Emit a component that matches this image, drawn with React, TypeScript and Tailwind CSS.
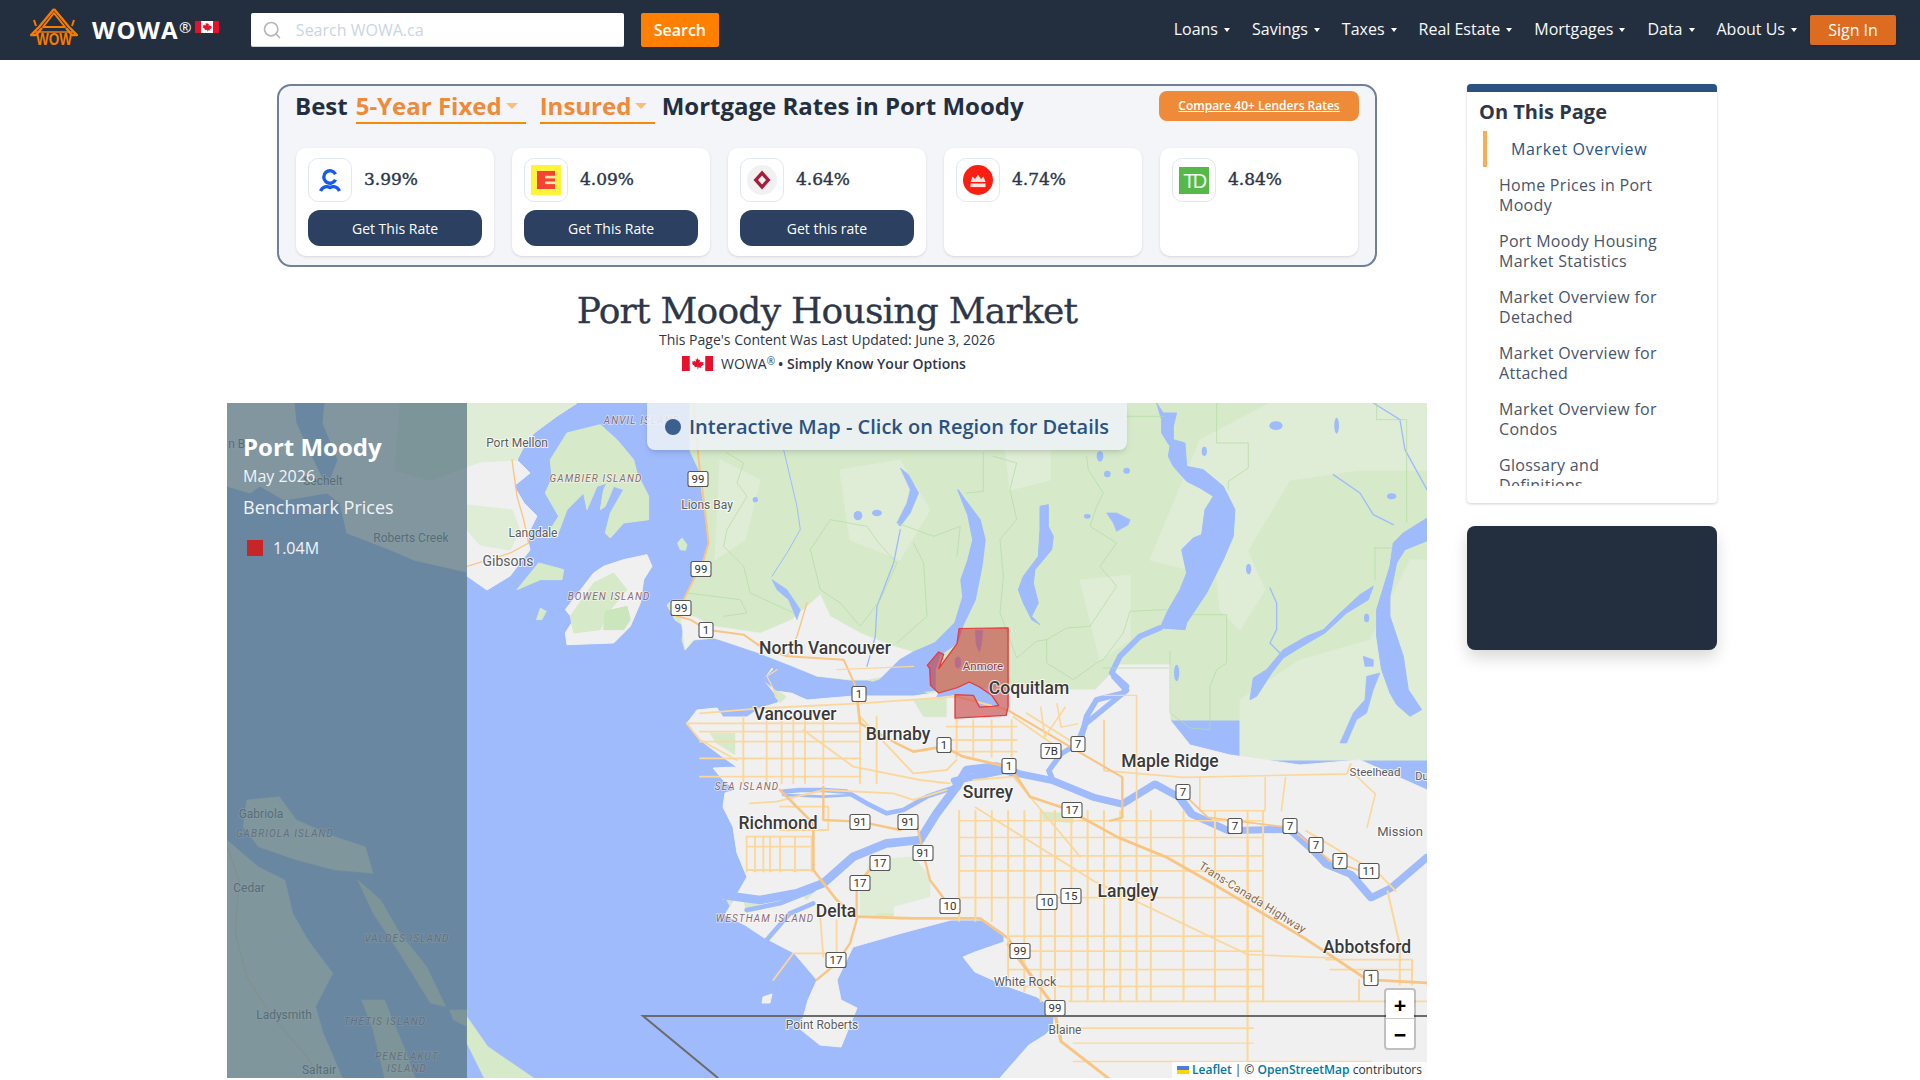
import React from "react";
import { Search } from "lucide-react";

const WATER = "#9fbbfc";
const GREEN = "#d6eaca";
const LIGHT = "#dfedd6";
const GREY = "#f0f0f0";
const ROAD = "#fbd79c";
const MAJOR = "#f8c583";
const TRAIL = "#b5dca6";

function Flag({ className }: { className?: string }) {
  return (
    <svg viewBox="0 0 48 24" className={className} preserveAspectRatio="none">
      <rect width="48" height="24" fill="#fff" />
      <rect width="12" height="24" fill="#e8112d" />
      <rect x="36" width="12" height="24" fill="#e8112d" />
      <path
        d="M24 3l2 3.6 2-1-.8 5 2.6-2.4.7 1.7 3-.5-1 3.2 1.3.8-4.6 3.8.5 1.7-4.7-.6V21h-1v-3.7l-4.7.6.5-1.7-4.6-3.8 1.3-.8-1-3.2 3 .5.7-1.7 2.6 2.4-.8-5 2 1z"
        fill="#e8112d"
      />
    </svg>
  );
}

function Logo() {
  return (
    <svg viewBox="0 0 48 40" className="w-[48px] h-[40px] -translate-y-[2px]" fill="none" stroke="#f57c00">
      <path d="M24 1 L9 19 L1 27 H6 L12 20 M24 1 L39 19 L47 27 H42 L36 20" strokeWidth="2.4" strokeLinejoin="round" />
      <path d="M24 5 L13 19 H35 Z" strokeWidth="2" strokeLinejoin="round" />
      <path d="M6 18 L4 12 M42 18 L44 12" strokeWidth="2" />
      <text x="24" y="37" textAnchor="middle" fontSize="16" fontWeight="700" fontFamily="Liberation Sans Narrow, Liberation Sans, sans-serif" fill="#f57c00" stroke="none" textLength="36" lengthAdjust="spacingAndGlyphs">WOW</text>
      <path d="M5 24 H43" strokeWidth="1.4" />
    </svg>
  );
}

function Caret() {
  return <span className="ml-[6px] inline-block w-0 h-0 border-x-[3.5px] border-x-transparent border-t-[4px] border-t-white translate-y-[1px]" />;
}

function Header() {
  const items = ["Loans", "Savings", "Taxes", "Real Estate", "Mortgages", "Data", "About Us"];
  return (
    <header className="h-[60px] bg-[#232f3f] flex items-center pl-[30px] pr-[24px]">
      <Logo />
      <span className="ml-[14px] text-white font-bold text-[24px] tracking-[1.2px] leading-none">WOWA</span>
      <span className="text-white text-[15px] leading-none -translate-y-[3px]">®</span>
      <Flag className="ml-[3.5px] w-[24px] h-[12px] -translate-y-[3px]" />
      <div className="ml-[32px] w-[373px] h-[34px] bg-white rounded-[2px] flex items-center pl-[11px] border-b border-[#cbd5e0]">
        <Search className="w-[20px] h-[20px] text-[#b4b8bd]" strokeWidth={2} />
        <span className="ml-[14px] text-[16px] text-[#cbd5e0]">Search WOWA.ca</span>
      </div>
      <button className="ml-[17px] w-[78px] h-[34px] bg-[#ff7f00] rounded-[2px] text-white font-semibold text-[16px]">Search</button>
      <nav className="ml-auto flex items-center gap-[22px]">
        {items.map((t) => (
          <span key={t} className="text-[16px] text-[#f7fafc] whitespace-nowrap flex items-center -translate-y-[1px]">
            {t}
            <Caret />
          </span>
        ))}
      </nav>
      <button className="ml-[13px] w-[86px] h-[30px] bg-[#dd6b20] rounded-[2px] text-white text-[16px] shadow">Sign In</button>
    </header>
  );
}

function Dropdown({ label, width }: { label: string; width: string }) {
  return (
    <span className={`${width} h-[36px] border-b-2 border-[#f58a07] flex items-start`}>
      <span className="text-[#ee8a38]">{label}</span>
      <span className="ml-[4px] mt-[15px] w-0 h-0 border-x-[6px] border-x-transparent border-t-[6px] border-t-[#f6bf7e]" />
    </span>
  );
}

function RateCard({ rate, button, children }: { rate: string; button?: string; children: React.ReactNode }) {
  return (
    <div className="w-[198px] h-[108px] bg-white rounded-[10px] shadow-sm pl-[12px] pr-[12px] pt-[10px]">
      <div className="flex items-center">
        <div className="w-[44px] h-[44px] rounded-[10px] border border-[#e2e8f0] flex items-center justify-center shrink-0">{children}</div>
        <span className="ml-[12px] text-[17px] text-[#2d3748] font-['DejaVu_Serif',serif] [-webkit-text-stroke:0.4px_#2d3748]">{rate}</span>
      </div>
      {button && (
        <button className="mt-[8px] w-[174px] h-[36px] rounded-[12px] bg-[#2c4162] text-white text-[14px]">{button}</button>
      )}
    </div>
  );
}

function Banner() {
  return (
    <section className="mx-auto mt-[24px] w-[1100px] h-[183px] rounded-[14px] border-2 border-[#718096] bg-[#f3f5f9] px-[17px]">
      <div className="relative h-[62px] flex items-start pt-[2px] -ml-px text-[24px] font-bold text-[#232f3f] leading-[36px]">
        <span>Best</span>
        <span className="w-[8px]" />
        <Dropdown label="5-Year Fixed" width="w-[170px]" />
        <span className="w-[14px]" />
        <Dropdown label="Insured" width="w-[115px]" />
        <span className="w-[7px]" />
        <span>Mortgage Rates in Port Moody</span>
        <a className="ml-auto translate-x-[1px] mt-[3px] w-[200px] h-[30px] bg-[#ee8a38] rounded-[8px] flex items-center justify-center text-white text-[12px] font-semibold underline">
          Compare 40+ Lenders Rates
        </a>
      </div>
      <div className="flex gap-[18px]">
        <RateCard rate="3.99%" button="Get This Rate">
          <svg viewBox="0 0 30 30" className="w-[30px] h-[30px]" fill="none" stroke="#1659f0" strokeLinecap="butt">
            <path d="M20.500 9.200A6.200 6.200 0 1 0 20.500 14.800" strokeWidth="3.400" />
            <path d="M5.500 26C8 21 12 21 15 22.500 18 21 22 21 24.500 26" strokeWidth="3.400" />
          </svg>
        </RateCard>
        <RateCard rate="4.09%" button="Get This Rate">
          <svg viewBox="0 0 30 30" className="w-[30px] h-[30px]">
            <rect width="30" height="30" fill="#fff33b" />
            <rect x="6" y="6" width="18" height="18" fill="#f44336" />
            <rect x="14" y="10.800" width="10" height="2.600" fill="#fde9a0" />
            <rect x="14" y="16.500" width="10" height="2.600" fill="#fde9a0" />
          </svg>
        </RateCard>
        <RateCard rate="4.64%" button="Get this rate">
          <svg viewBox="0 0 30 30" className="w-[30px] h-[30px]">
            <circle cx="15" cy="15" r="15" fill="#f2f1f1" />
            <path d="M15 5.500L23.500 15 15 24.500 6.500 15z" fill="#a51c3c" />
            <path d="M15 10.500L19 15l-4 4.500L11 15z" fill="#f2f1f1" />
          </svg>
        </RateCard>
        <RateCard rate="4.74%">
          <svg viewBox="0 0 30 30" className="w-[30px] h-[30px]">
            <circle cx="15" cy="15" r="15" fill="#fb1e12" />
            <path d="M7.500 17L9.500 11.500 12 14 15 9.500 18 14 20.500 11.500 22.500 17z" fill="#ffe3dc" />
            <rect x="7.500" y="18.500" width="15" height="3.600" fill="#ffe3dc" />
          </svg>
        </RateCard>
        <RateCard rate="4.84%">
          <svg viewBox="0 0 30 27" className="w-[30px] h-[27px]">
            <rect width="30" height="27" fill="#54b948" />
            <text x="15" y="21" textAnchor="middle" fontSize="20" fontWeight="400" fontFamily="Liberation Sans, sans-serif" fill="#f0faee" letterSpacing="-2.5">TD</text>
          </svg>
        </RateCard>
      </div>
    </section>
  );
}

const pts = (a: number[]) => {
  const out: string[] = [];
  for (let i = 0; i < a.length; i += 2) out.push(`${a[i]},${a[i + 1]}`);
  return out.join(" ");
};

function Poly({ p, fill, sw = 1 }: { p: number[]; fill: string; sw?: number }) {
  return <polygon points={pts(p)} fill={fill} stroke={fill} strokeWidth={sw} strokeLinejoin="round" />;
}
function Line({ p, c = ROAD, w = 1.4 }: { p: number[]; c?: string; w?: number }) {
  return <polyline points={pts(p)} fill="none" stroke={c} strokeWidth={w} strokeLinejoin="round" strokeLinecap="round" />;
}

function Label({ x, y, t, s = 12, c = "#5c5c5c", w = 400 }: { x: number; y: number; t: string; s?: number; c?: string; w?: number }) {
  return (
    <text x={x} y={y} textAnchor="middle" dominantBaseline="middle" fontFamily="Roboto, sans-serif" fontSize={s} fontWeight={w} fill={c} stroke="#fff" strokeWidth={2} strokeOpacity={0.75} style={{ paintOrder: "stroke" }}>
      {t}
    </text>
  );
}
function City({ x, y, t }: { x: number; y: number; t: string }) {
  return <Label x={x} y={y} t={t} s={17.5} c="#3a3a3a" w={500} />;
}
function Isle({ x, y, t }: { x: number; y: number; t: string }) {
  return (
    <text x={x} y={y} textAnchor="middle" dominantBaseline="middle" fontFamily="Roboto, sans-serif" fontSize={10} fontStyle="italic" letterSpacing={1.1} fill="#8b6a70" stroke="#fff" strokeWidth={1.6} strokeOpacity={0.55} style={{ paintOrder: "stroke" }}>
      {t}
    </text>
  );
}
function Shield({ x, y, t }: { x: number; y: number; t: string }) {
  const w = t.length > 1 ? 20 : 14;
  return (
    <g>
      <rect x={x - w / 2} y={y - 7.5} width={w} height={15} rx={2} fill="#fff" stroke="#555" strokeWidth={1.1} />
      <text x={x} y={y + 0.5} textAnchor="middle" dominantBaseline="middle" fontFamily="Roboto, sans-serif" fontSize={11.5} fill="#333">{t}</text>
    </g>
  );
}

const shields: [number, number, string][] = [
  [698, 479, "99"], [701, 569, "99"], [681, 608, "99"], [706, 630, "1"], [859, 694, "1"], [944, 745, "1"],
  [1051, 751, "7B"], [1078, 744, "7"], [1009, 766, "1"], [1072, 810, "17"], [1183, 792, "7"], [1235, 826, "7"],
  [1290, 826, "7"], [1316, 845, "7"], [1340, 861, "7"], [1369, 871, "11"], [860, 822, "91"], [908, 822, "91"],
  [923, 853, "91"], [880, 863, "17"], [860, 883, "17"], [950, 906, "10"], [1047, 902, "10"], [1071, 896, "15"],
  [1020, 951, "99"], [836, 960, "17"], [1055, 1008, "99"], [1371, 978, "1"],
];

function MapDrawing() {
  const surreyV: [number, number][] = [[390, 1020], [430, 1020], [470, 1020], [510, 1200], [550, 1230], [590, 1260], [625, 1260], [665, 1260], [705, 1260], [745, 1260], [785, 1260], [825, 1260], [860, 1260], [940, 1260], [1017, 1260], [1097, 1260], [1135, 1260]];
  const surreyH: [number, number][] = [[720, 390], [770, 390], [825, 390], [870, 390], [950, 390], [1065, 510], [1110, 510], [1165, 510], [1215, 520]];
  const vanV = [190, 260, 305, 340, 375, 430, 540, 590];
  const vanH = [130, 155, 185, 235, 290];
  const rmdV = [200, 225, 250, 270, 300, 345, 395];
  const rmdH = [470, 500, 570];
  const burnV = [830, 880, 935, 995];
  const burnH = [140, 180, 215];
  return (
    <svg viewBox="227 403 1200 675" className="absolute inset-0 w-full h-full">
      <rect x="227" y="403" width="1200" height="675" fill={WATER} />

      {/* Sunshine Coast */}
      <Poly fill={GREY} p={[227,403,577,403,557,416,534,433,524,446,517,460,530,473,514,486,524,503,537,516,527,536,530,550,510,576,487,590,467,576,467,572,414,560,391,550,347,533,340,503,327,493,284,500,260,486,250,493,227,486]} />
      <Poly fill={LIGHT} p={[400,403,577,403,557,416,534,433,524,446,517,460,480,462,430,480,395,470]} />
      <Poly fill={LIGHT} p={[467,505,512,510,520,530,510,550,480,545,467,530]} />
      <Poly fill={WATER} p={[295,403,324,403,322,423,337,460,327,486,314,460,297,423]} />

      {/* Vancouver Island & Gulf Islands */}
      <g transform="translate(220 580) scale(0.3827 0.3333)">
        <Poly fill="#ecefe9" p={[70,660,155,650,200,720,300,770,380,800,400,880,300,870,200,840,100,800,60,740]} />
        <Poly fill="#ecefe9" p={[18,780,100,860,170,900,190,1000,230,1080,295,1180,250,1280,270,1360,320,1494,18,1494]} />
        <Poly fill="#e3ecdc" p={[360,900,420,960,470,1060,540,1160,590,1280,550,1270,470,1120,400,1000]} />
        <Poly fill="#e3ecdc" p={[370,1260,430,1260,480,1400,510,1494,430,1494,400,1350]} />
        <Poly fill="#e3ecdc" p={[600,1290,645,1290,645,1340,610,1320]} />
        <Poly fill={GREEN} p={[645,1310,700,1400,820,1494,690,1494,645,1390]} />
        <Line p={[18,800,50,900,40,1060,70,1190,130,1300,240,1450,240,1494]} c="#f5d9a5" w={3} />
      </g>

      {/* Islands of Howe Sound */}
      <g transform="translate(467 403) scale(0.3333)">
        <Poly fill={GREEN} sw={3} p={[250,170,300,90,400,65,450,110,500,170,510,210,545,280,545,350,470,360,430,405,415,390,430,330,470,260,440,250,415,310,400,320,410,260,420,240,390,250,360,320,350,270,300,320,270,400,240,395,275,340,235,270,255,225]} />
        <Poly fill={GREY} sw={3} p={[295,620,380,510,410,490,470,470,540,455,555,490,530,530,520,600,490,670,440,720,300,725,295,690,320,650]} />
        <Poly fill={GREEN} sw={3} p={[310,640,380,540,440,510,480,560,430,620,400,680,320,690]} />
        <Poly fill="#cbe5bc" sw={3} p={[415,625,480,610,490,650,470,680,410,680]} />
        <Poly fill={GREEN} sw={3} p={[150,560,215,480,290,500,285,530,220,530]} />
        <Poly fill={GREEN} sw={3} p={[632,420,645,405,660,425,655,442,640,440]} />
        <Poly fill={GREEN} sw={2} p={[208,650,220,615,238,625,225,650]} />
      </g>

      {/* Mainland north */}
      <Poly fill={GREEN} p={[690,403,1427,403,1427,720,1094,720,1004,700,940,695,867,680,850,680,817,676,794,666,777,660,764,655,744,645,714,638,694,640,685,650,682,640,684,626,675,620,667,605,672,600,684,600,694,580,704,560,709,543,705,513,702,493,699,470,690,451]} />
      <Poly fill={LIGHT} p={[1150,560,1200,440,1270,403,1427,403,1427,470,1360,470,1290,480,1230,580]} />
      <Poly fill={LIGHT} p={[1240,700,1300,660,1370,640,1410,560,1427,560,1427,760,1240,760]} />
      <Poly fill={LIGHT} p={[1215,560,1245,545,1265,590,1240,630,1220,610]} />
      <Poly fill={LIGHT} p={[720,460,760,480,745,540,715,560]} />
      <Poly fill={LIGHT} p={[1080,580,1130,575,1130,640,1100,660]} />
      <Poly fill={LIGHT} p={[840,470,900,460,930,510,900,560,850,540]} />
      <Poly fill={LIGHT} p={[1005,450,1050,450,1050,480,1010,490]} />

      {/* South land */}
      <Poly fill={GREY} p={[687,723,697,710,717,708,723,717,747,717,760,708,777,703,780,700,764,680,772,668,785,690,800,697,807,700,854,696,914,696,934,693,955,690,1008,687,1060,690,1095,690,1120,665,1170,665,1170,720,1190,745,1230,755,1300,765,1360,760,1427,790,1427,1078,1000,1078,1029,1045,1045,1035,1053,1027,1055,1010,1037,997,1004,985,975,972,963,957,975,952,1004,942,1004,933,984,920,951,920,902,933,853,947,837,980,841,1000,857,1008,841,1047,820,1045,800,1029,808,1000,817,980,794,953,763,937,745,925,725,915,747,877,737,853,733,827,723,807,725,793,735,790,723,780,713,768,737,767,720,755,700,740]} />
      <Poly fill={GREY} p={[763,997,772,994,770,1003,762,1003]} />
      <g transform="translate(467 403) scale(0.3333)">
        <Poly fill={GREY} p={[640,640,680,640,740,670,880,690,975,650,1020,610,1060,575,1090,640,1180,690,1280,730,1350,750,1370,770,1360,800,1200,830,1150,830,1050,820,890,755,740,705,680,710,655,740]} />
      </g>

      {/* Parks in the city */}
      <g transform="translate(680 680) scale(0.3333)">
        <Poly fill={GREEN} p={[90,160,165,160,165,225,110,190]} />
        <Poly fill={LIGHT} p={[540,640,570,540,700,530,750,590,750,650,640,680,640,710,540,710]} />
        <Poly fill={GREEN} p={[700,60,800,50,800,110,730,110]} />
        <Poly fill={GREEN} p={[590,700,640,700,640,710,590,710]} />
        <Poly fill={GREEN} p={[1085,395,1180,400,1180,430,1090,420]} />
        <Poly fill={GREEN} p={[280,20,320,50,300,70,285,50]} />
        <Poly fill={GREEN} p={[100,640,150,640,130,660]} />
        <Poly fill={GREEN} p={[190,660,260,680,200,700]} />
        <Poly fill={GREEN} p={[135,650,160,650,150,680]} />
        <Poly fill={GREEN} p={[360,640,400,640,380,660]} />
      </g>

      {/* Water */}
      <Poly fill={WATER} sw={1.5} p={[958,490,965,500,980,520,985,540,982,565,977,590,975,600,963,625,957,643,940,655,935,670,935,690,915,692,880,692,869,684,880,680,900,660,914,652,935,643,955,623,963,597,961,580,968,560,973,540,968,515]} />
      <Poly fill={WATER} p={[763,680,775,668,800,680,850,682,880,684,880,692,850,692,790,692,776,690]} />
      <g transform="translate(800 580) scale(0.408 0.3344)">
        <Poly fill={WATER} sw={2} p={[340,338,385,322,415,305,440,320,470,345,487,375,470,378,440,380,425,345,380,343,335,350]} />
        <Poly fill={WATER} sw={2} p={[430,150,448,150,445,190,440,215,432,195]} />
        <ellipse cx="387" cy="247" rx="8" ry="18" fill={WATER} />
      </g>
      <g transform="translate(960 403) scale(0.3333)" fill={WATER}>
        <Poly fill={WATER} sw={3} p={[590,0,610,30,650,30,640,70,640,110,675,120,680,190,730,200,790,250,825,320,820,400,790,470,740,570,680,660,675,680,600,675,625,620,660,560,680,510,665,440,700,405,725,395,735,320,760,280,720,255,680,235,640,190,625,160,630,130,605,90,605,50]} />
        <Poly fill={WATER} sw={3} p={[240,310,265,305,265,370,280,400,275,440,225,500,220,540,235,600,215,640,240,665,215,650,190,600,175,560,190,520,235,460,240,380]} />
        <Poly fill={WATER} sw={3} p={[1240,550,1225,590,1160,630,1095,690,1060,710,1010,740,970,765,935,810,890,880,870,890,880,825,920,800,970,740,1040,700,1090,680,1130,640,1200,575]} />
        <Poly fill={WATER} sw={3} p={[1410,340,1410,410,1335,440,1310,480,1290,580,1290,640,1330,760,1345,860,1385,920,1350,940,1310,905,1290,870,1265,800,1250,700,1250,620,1290,490,1300,420,1330,390]} />
        <Poly fill={WATER} sw={2} p={[440,330,470,330,510,350,505,365,470,385,460,360]} />
        <Poly fill={WATER} sw={2} p={[1210,760,1240,770,1240,790,1215,790]} />
        <Poly fill={WATER} sw={2} p={[1220,820,1260,810,1240,860,1220,930,1190,950,1160,1020,1140,1020,1180,930,1215,890]} />
        <ellipse cx="948" cy="68" rx="20" ry="13" />
        <ellipse cx="733" cy="145" rx="8" ry="14" />
        <ellipse cx="866" cy="498" rx="8" ry="16" />
        <ellipse cx="442" cy="213" rx="10" ry="10" />
        <ellipse cx="500" cy="203" rx="10" ry="9" />
        <ellipse cx="382" cy="340" rx="10" ry="7" />
        <ellipse cx="650" cy="810" rx="8" ry="25" />
        <ellipse cx="1295" cy="280" rx="14" ry="9" />
        <ellipse cx="1220" cy="645" rx="8" ry="13" />
        <ellipse cx="1130" cy="68" rx="7" ry="24" />
        <ellipse cx="420" cy="160" rx="10" ry="16" />
        <Line p={[1120,215,1200,270,1240,335,1300,365]} c={WATER} w={4} />
        <Line p={[930,555,950,600,950,680,930,720,960,750]} c={WATER} w={4} />
        <Line p={[1240,0,1320,50,1335,140,1401,260]} c={WATER} w={4} />
        <Line p={[600,675,540,700,480,760,455,810,500,850,490,870,410,890,380,940,360,1020]} c={WATER} w={17} />
      </g>
      <g transform="translate(467 403) scale(0.3333)">
        <Poly fill={WATER} sw={2} p={[1300,195,1325,215,1355,270,1330,330,1300,370,1290,360,1320,300,1330,260]} />
        <Poly fill={WATER} sw={2} p={[915,530,960,560,1000,620,990,650,965,590,930,560]} />
        <ellipse cx="1173" cy="338" rx="13" ry="14" fill={WATER} />
        <ellipse cx="1230" cy="330" rx="15" ry="10" fill={WATER} />
        <ellipse cx="865" cy="290" rx="8" ry="8" fill={WATER} />
        <Line p={[950,140,990,310,1000,380,960,450,915,520]} c={WATER} w={3} />
        <Line p={[1300,380,1280,480,1230,610,1225,700,1200,790]} c={WATER} w={4} />
      </g>
      <g transform="translate(800 580) scale(0.408 0.3344)">
        <Line p={[380,600,500,570,620,600,720,650,790,670,870,610,930,650,960,700,1050,750,1200,745,1260,810,1290,850,1350,880,1400,950,1450,920,1536,830]} c={WATER} w={21} />
        <Line p={[680,490,700,430,800,330,770,290]} c={WATER} w={15} />
        <Line p={[680,490,640,520,610,570,620,600]} c={WATER} w={14} />
      </g>
      <g transform="translate(680 680) scale(0.3333)">
        <Line p={[310,335,360,330,430,330,500,335,560,370,620,400,670,390,740,350,830,320,860,270,950,260,1010,280]} c={WATER} w={14} />
        <Line p={[830,320,860,270,950,260,1010,280]} c={WATER} w={26} />
        <Line p={[310,345,430,350,520,345]} c={WATER} w={8} />
        <Line p={[90,640,240,660,350,640,430,610,520,530,620,490,720,480,770,400,830,320]} c={WATER} w={26} />
        <Line p={[200,690,300,670,400,630]} c={WATER} w={14} />
        <Line p={[260,780,330,700,400,670]} c={WATER} w={14} />
      </g>

      {/* Trails and park edges */}
      <g strokeDasharray="6 3" fill="none">
        <g transform="translate(467 403) scale(0.3333)">
          <Line p={[780,150,830,180,810,240,840,280,780,380,770,430,830,490,850,570,980,630]} c={TRAIL} w={2.5} />
          <Line p={[1030,440,1090,350,1200,370,1235,420,1290,480,1240,590,1180,670]} c={TRAIL} w={2.5} />
          <Line p={[1030,440,1060,560,1120,600,1180,670]} c={TRAIL} w={2.5} />
          <Line p={[1290,360,1400,400,1480,370,1470,460]} c={TRAIL} w={2.5} />
          <Line p={[1340,420,1370,480,1380,640,1290,720]} c={TRAIL} w={2.5} />
          <Line p={[660,570,820,590,840,630,770,640]} c={TRAIL} w={2.5} />
        </g>
        <g transform="translate(960 403) scale(0.3333)">
          <Line p={[70,150,70,265,20,270]} c={TRAIL} w={2.5} />
          <Line p={[100,160,170,180,150,260,170,350,120,410,130,520,120,630,170,765,230,715,260,710,320,675,390,670,470,550,420,490,470,420,390,370,410,310,430,270,385,200,380,160]} c={TRAIL} w={2.5} />
          <Line p={[260,710,260,780,340,830,410,780,430,770,490,690,510,625,620,620]} c={TRAIL} w={2.5} />
          <Line p={[770,0,770,120,865,120,865,195,805,235,805,260]} c={TRAIL} w={2.5} />
          <Line p={[700,635,800,635,800,780,770,800,750,850,750,980,690,975,630,930,630,745]} c={TRAIL} w={2.5} />
          <Line p={[500,40,610,40]} c={TRAIL} w={2.5} />
          <Line p={[1250,0,1250,50,1340,50,1340,360]} c={TRAIL} w={2.5} />
          <Line p={[1245,435,1300,435]} c={TRAIL} w={2.5} />
          <Line p={[1245,435,1245,530]} c={TRAIL} w={2.5} />
          <Line p={[430,795,625,795]} c={TRAIL} w={2.5} />
        </g>
      </g>

      {/* Roads */}
      <g transform="translate(680 680) scale(0.3333)">
        {vanV.map((x) => <Line key={x} p={[x, 110, x, 310]} w={5.5} />)}
        {vanH.map((y) => <Line key={y} p={[60, y, 540, y]} w={5.5} />)}
        {rmdV.map((x) => <Line key={x} p={[x, 470, x, 575]} w={5.5} />)}
        {rmdH.map((y) => <Line key={y} p={[200, y, 395, y]} w={5.5} />)}
        {burnV.map((x) => <Line key={x} p={[x, 120, x, 230]} w={5.5} />)}
        {burnH.map((y) => <Line key={y} p={[800, y, 1010, y]} w={5.5} />)}
        <Line p={[60,130,20,130,60,180,170,240]} w={5.5} />
        <Line p={[540,110,700,280,800,270,830,240]} w={5.5} />
        <Line p={[370,150,520,260,720,300,810,310]} w={5.5} />
        <Line p={[210,370,290,365,430,330,640,340,700,360,800,330]} w={5.5} />
        <Line p={[300,380,445,380,445,450,300,450]} w={5.5} />
        <Line p={[880,300,1000,290,1200,530]} w={5.5} />
        <Line p={[1040,100,1200,200]} w={5.5} />
        <Line p={[60,100,240,85,540,70,830,50,985,90]} w={5.5} />
        <Line p={[1000,110,1130,200]} w={5.5} />
        <Line p={[420,700,430,830]} w={5.5} />
        <Line p={[470,720,470,840]} w={5.5} />
        <Line p={[280,900,340,820,440,820,470,850]} w={5.5} />
        <Line p={[300,330,400,430,400,570,470,660,530,710,700,715,900,715,985,775,1060,900]} c={MAJOR} w={8} />
        <Line p={[530,40,540,130,650,190,700,215,790,200,850,230,980,260,1010,290,1050,350,1170,390,1200,400]} c={MAJOR} w={8} />
        <Line p={[430,320,430,420,540,425,660,450,710,430,730,520,750,600,780,640,810,680]} c={MAJOR} w={7} />
        <Line p={[600,530,570,570,530,610,530,720,510,790,470,850,410,900]} c={MAJOR} w={7} />
      </g>
      <g transform="translate(800 580) scale(0.408 0.3344)">
        {surreyV.map(([x, e]) => <Line key={x} p={[x, 690, x, e]} w={5} />)}
        {surreyH.map(([y, s]) => <Line key={y} p={[s, y, 1135, y]} w={5} />)}
        <Line p={[1097,780,1097,1494]} w={5} />
        <Line p={[1135,1000,1135,1260]} w={5} />
        <Line p={[660,1260,1536,1260]} w={5} />
        <Line p={[620,1340,1110,1340]} w={5} />
        <Line p={[670,1385,1110,1385]} w={4} />
        <Line p={[670,1440,1400,1440]} w={4} />
        <Line p={[1290,1135,1500,1135,1500,1210]} w={5} />
        <Line p={[1300,1165,1500,1165]} w={5} />
        <Line p={[1370,1195,1370,1260]} w={5} />
        <Line p={[1440,930,1470,1090,1470,1210]} w={5} />
        <Line p={[430,680,720,900,1097,1120,1300,1130]} w={5} />
        <Line p={[1240,750,1420,880,1460,930]} w={5} />
        <Line p={[745,345,825,345,825,700]} w={4} />
        <Line p={[745,420,745,570,940,590,1340,580,1350,550]} w={5} />
        <Line p={[980,590,980,690,1140,690,1140,590]} w={4} />
        <Line p={[1180,690,1190,590]} w={4} />
        <Line p={[1350,570,1410,640,1390,740]} w={4} />
        <Line p={[510,390,790,590,790,710,760,720]} c={MAJOR} w={6} />
        <Line p={[940,640,1000,710,1200,740,1300,840,1400,880]} c={MAJOR} w={5} />
        <Line p={[590,380,600,470,650,380]} w={4} />
        <Line p={[630,370,640,440,680,430]} w={4} />
        <Line p={[660,690,780,770,900,830,1000,900,1235,1070,1390,1195,1536,1205]} c={MAJOR} w={8} />
        <Line p={[510,1090,620,1270,640,1380,760,1494]} c={MAJOR} w={8} />
      </g>
      <g transform="translate(467 403) scale(0.3333)">
        <Line p={[680,0,695,170,715,330,725,420,710,470,650,590,630,640,670,650,720,680,830,695,880,730,960,760,1130,770,1175,870]} c={MAJOR} w={6} />
        <Line p={[135,170,150,280,170,350,185,420,130,450,0,490]} c={MAJOR} w={4} />
        <Line p={[1020,600,990,700,960,760]} c={MAJOR} w={4} />
        <Line p={[1110,800,1340,790]} w={4} />
        <Line p={[930,800,900,820,930,880]} w={4} />
      </g>

      {/* Port Moody */}
      <g transform="translate(800 580) scale(0.408 0.3344)">
        <polygon
          points={pts([390,145,510,143,510,380,505,405,380,413,380,343,425,345,440,380,470,378,487,375,470,345,440,320,415,305,385,322,340,338,320,315,318,265,312,255,340,215,352,222,340,265,385,190])}
          fill="#c53030"
          fillOpacity={0.55}
          stroke="#e53e3e"
          strokeWidth={3.5}
          strokeLinejoin="round"
        />
      </g>

      {/* Labels */}
      <Label x={517} y={444} t="Port Mellon" />
      <Isle x={642} y={421} t="ANVIL ISLAND" />
      <Isle x={596} y={479} t="GAMBIER ISLAND" />
      <Label x={707} y={506} t="Lions Bay" />
      <Label x={533} y={534} t="Langdale" />
      <Label x={508} y={562} t="Gibsons" s={14} />
      <Isle x={609} y={597} t="BOWEN ISLAND" />
      <City x={825} y={649} t="North Vancouver" />
      <City x={795} y={715} t="Vancouver" />
      <City x={898} y={735} t="Burnaby" />
      <City x={1029} y={689} t="Coquitlam" />
      <City x={1170} y={762} t="Maple Ridge" />
      <City x={988} y={793} t="Surrey" />
      <City x={778} y={824} t="Richmond" />
      <City x={836} y={912} t="Delta" />
      <City x={1128} y={892} t="Langley" />
      <City x={1367} y={948} t="Abbotsford" />
      <Label x={983} y={667} t="Anmore" s={11.5} c="#8a4040" />
      <Label x={1375} y={773} t="Steelhead" s={11.5} />
      <Label x={1400} y={833} t="Mission" s={13} />
      <Label x={1422} y={777} t="Du" s={11} />
      <Label x={1025} y={983} t="White Rock" s={12.5} />
      <Label x={822} y={1026} t="Point Roberts" s={12} />
      <Label x={1065} y={1031} t="Blaine" s={12} />
      <Isle x={747} y={787} t="SEA ISLAND" />
      <Isle x={765} y={919} t="WESTHAM ISLAND" />
      <text transform="translate(1198 868) rotate(32)" fontFamily="Roboto, sans-serif" fontSize={11.5} fill="#8a6a4a" stroke="#fff" strokeWidth={1.5} strokeOpacity={0.6} style={{ paintOrder: "stroke" }} letterSpacing={0.3}>Trans-Canada Highway</text>
      <Label x={323} y={482} t="Sechelt" />
      <Label x={411} y={539} t="Roberts Creek" />
      <Label x={240} y={445} t="n Ba" />
      <Label x={261} y={815} t="Gabriola" />
      <Isle x={285} y={834} t="GABRIOLA ISLAND" />
      <Label x={249} y={889} t="Cedar" />
      <Isle x={407} y={939} t="VALDES ISLAND" />
      <Label x={284} y={1016} t="Ladysmith" />
      <Isle x={385} y={1022} t="THETIS ISLAND" />
      <Isle x={407} y={1057} t="PENELAKUT" />
      <Isle x={407} y={1069} t="ISLAND" />
      <Label x={319} y={1071} t="Saltair" />

      {shields.map(([x, y, t], i) => <Shield key={i} x={x} y={y} t={t} />)}

      {/* Border */}
      <polyline points="1427,1016 643,1016 718,1078" fill="none" stroke="#6b6b6b" strokeWidth={2} />
    </svg>
  );
}

function MapPanel() {
  return (
    <section className="relative mt-[30px] w-[1200px] h-[675px] overflow-hidden">
      <MapDrawing />
      <div className="absolute left-0 top-0 bottom-0 w-[240px] bg-[rgba(86,115,128,0.72)] pl-[16px] pt-[28px] text-white">
        <div className="text-[24px] font-bold leading-[32px]">Port Moody</div>
        <div className="text-[16px] leading-[24px] mt-[1px] text-[#f0f4f8]">May 2026</div>
        <div className="text-[18px] leading-[28px] mt-[5px] text-[#f0f4f8]">Benchmark Prices</div>
        <div className="flex items-center mt-[15px] ml-[4px]">
          <span className="w-[16px] h-[16px] bg-[#c82626]" />
          <span className="ml-[10px] text-[16px] leading-[24px] text-[#f0f4f8]">1.04M</span>
        </div>
      </div>
      <div className="absolute left-[420px] top-0 w-[480px] h-[47px] bg-[rgba(237,242,247,0.85)] rounded-b-[8px] shadow-md flex items-center pl-[18px]">
        <span className="w-[16px] h-[16px] rounded-full bg-[#3b5f8f]" />
        <span className="ml-[8px] text-[20px] font-semibold text-[#2c5282] whitespace-nowrap">Interactive Map - Click on Region for Details</span>
      </div>
      <div className="absolute left-[1157px] top-[585px] w-[32px] h-[62px] bg-white rounded-[4px] border-2 border-[rgba(0,0,0,0.2)] bg-clip-padding flex flex-col">
        <div className="h-[29px] border-b border-[#ccc] flex items-center justify-center text-[22px] font-bold text-black leading-none">+</div>
        <div className="h-[29px] flex items-center justify-center text-[22px] font-bold text-black leading-none">−</div>
      </div>
      <div className="absolute right-0 bottom-0 h-[16px] bg-[rgba(255,255,255,0.8)] pl-[5px] pr-[5px] flex items-center text-[12px] text-[#333] leading-none whitespace-nowrap">
        <span className="w-[12px] h-[8px] mr-[3px] flex flex-col">
          <span className="h-1/2 bg-[#4c7be1]" />
          <span className="h-1/2 bg-[#ffd500]" />
        </span>
        <span className="text-[#0078a8] font-semibold">Leaflet</span>
        <span className="mx-[3px]">|</span>
        <span>©&nbsp;</span>
        <span className="text-[#0078a8] font-semibold">OpenStreetMap</span>
        <span>&nbsp;contributors</span>
      </div>
    </section>
  );
}

function Sidebar() {
  const items = [
    "Home Prices in Port Moody",
    "Port Moody Housing Market Statistics",
    "Market Overview for Detached",
    "Market Overview for Attached",
    "Market Overview for Condos",
    "Glossary and Definitions",
  ];
  return (
    <aside className="w-[250px] mt-[24px] shrink-0">
      <div className="h-[419px] bg-white rounded-[4px] border-t-[8px] border-[#2c5282] shadow-[0_1px_3px_rgba(0,0,0,0.18)] pl-[12px]">
        <h2 className="text-[20px] font-bold text-[#2d3748] leading-[28px] pt-[6px] h-[39px]">On This Page</h2>
        <div className="h-[355px] overflow-hidden">
          <div className="ml-[4px] border-l-[4px] border-[#f6ad55] h-[36px] pl-[24px] flex items-center text-[16px] font-medium tracking-[0.65px] text-[#2c5282]">Market Overview</div>
          <ul className="pl-[20px] pr-[20px] pt-[8px] flex flex-col gap-[16px]">
            {items.map((t) => (
              <li key={t} className="text-[16px] font-medium leading-[20px] tracking-[0.3px] text-[#4a5568] w-[170px]">{t}</li>
            ))}
          </ul>
        </div>
      </div>
      <div className="mt-[23px] h-[124px] bg-[#232f3f] rounded-[8px] shadow-[0_8px_16px_rgba(0,0,0,0.15)]" />
    </aside>
  );
}

export default function App() {
  return (
    <div className="w-[1920px] h-[1080px] overflow-hidden bg-white font-['Open_Sans','Noto_Sans',sans-serif]">
      <Header />
      <div className="flex pl-[227px] gap-[40px]">
        <main className="w-[1200px]">
          <Banner />
          <div className="mt-[22px] text-center">
            <h1 className="text-[36px] leading-[43px] tracking-[-0.76px] text-[#2d3748] font-['DejaVu_Serif',serif] [-webkit-text-stroke:0.3px_#2d3748]">Port Moody Housing Market</h1>
            <p className="text-[14px] leading-[16px] text-[#2d3748]">This Page's Content Was Last Updated: June 3, 2026</p>
            <p className="mt-[7px] flex items-center justify-center text-[14px] font-semibold leading-[18px] text-[#2d3748] -translate-x-[3px]">
              <Flag className="w-[31px] h-[15px] mr-[8px] -translate-y-[1px]" />
              <span className="font-normal">WOWA</span>
              <span className="font-normal text-[10px] -translate-y-[3px]">®</span>
              <span className="ml-[3px]">• Simply Know Your Options</span>
            </p>
          </div>
          <MapPanel />
        </main>
        <Sidebar />
      </div>
    </div>
  );
}
